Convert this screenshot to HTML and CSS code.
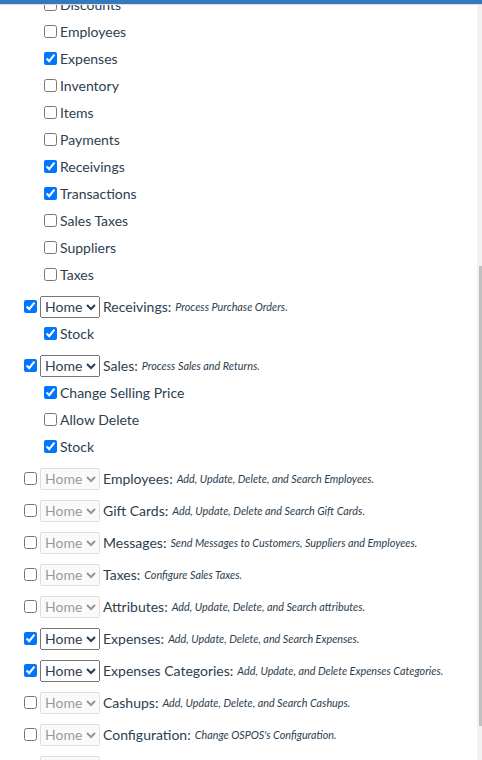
FILE: index.html
```html
<!DOCTYPE html>
<html lang="en">
<head>
<meta charset="utf-8">
<title>Permissions</title>
<link rel="stylesheet" href="styles.css">
</head>
<body>
<div class="topbar"></div>
<div class="viewport">
  <div class="content">
    <ul class="subs first">
      <li class="sub"><input type="checkbox"><span>Discounts</span></li>
      <li class="sub"><input type="checkbox"><span>Employees</span></li>
      <li class="sub"><input type="checkbox" checked><span>Expenses</span></li>
      <li class="sub"><input type="checkbox"><span>Inventory</span></li>
      <li class="sub"><input type="checkbox"><span>Items</span></li>
      <li class="sub"><input type="checkbox"><span>Payments</span></li>
      <li class="sub"><input type="checkbox" checked><span>Receivings</span></li>
      <li class="sub"><input type="checkbox" checked><span>Transactions</span></li>
      <li class="sub"><input type="checkbox"><span>Sales Taxes</span></li>
      <li class="sub"><input type="checkbox"><span>Suppliers</span></li>
      <li class="sub"><input type="checkbox"><span>Taxes</span></li>
    </ul>
    <ul class="modules">
      <li class="module">
        <div class="head"><input type="checkbox" checked><select class="sel"><option>Home</option></select><span class="name">Receivings:</span> <em class="desc">Process Purchase Orders.</em></div>
        <ul class="subs">
          <li class="sub"><input type="checkbox" checked><span>Stock</span></li>
        </ul>
      </li>
      <li class="module">
        <div class="head"><input type="checkbox" checked><select class="sel"><option>Home</option></select><span class="name">Sales:</span> <em class="desc">Process Sales and Returns.</em></div>
        <ul class="subs">
          <li class="sub"><input type="checkbox" checked><span>Change Selling Price</span></li>
          <li class="sub"><input type="checkbox"><span>Allow Delete</span></li>
          <li class="sub"><input type="checkbox" checked><span>Stock</span></li>
        </ul>
      </li>
      <li class="module">
        <div class="head"><input type="checkbox"><select class="sel" disabled><option>Home</option></select><span class="name">Employees:</span> <em class="desc">Add, Update, Delete, and Search Employees.</em></div>
      </li>
      <li class="module">
        <div class="head"><input type="checkbox"><select class="sel" disabled><option>Home</option></select><span class="name">Gift Cards:</span> <em class="desc">Add, Update, Delete and Search Gift Cards.</em></div>
      </li>
      <li class="module">
        <div class="head"><input type="checkbox"><select class="sel" disabled><option>Home</option></select><span class="name">Messages:</span> <em class="desc">Send Messages to Customers, Suppliers and Employees.</em></div>
      </li>
      <li class="module">
        <div class="head"><input type="checkbox"><select class="sel" disabled><option>Home</option></select><span class="name">Taxes:</span> <em class="desc">Configure Sales Taxes.</em></div>
      </li>
      <li class="module">
        <div class="head"><input type="checkbox"><select class="sel" disabled><option>Home</option></select><span class="name">Attributes:</span> <em class="desc">Add, Update, Delete, and Search attributes.</em></div>
      </li>
      <li class="module">
        <div class="head"><input type="checkbox" checked><select class="sel"><option>Home</option></select><span class="name">Expenses:</span> <em class="desc">Add, Update, Delete, and Search Expenses.</em></div>
      </li>
      <li class="module">
        <div class="head"><input type="checkbox" checked><select class="sel"><option>Home</option></select><span class="name">Expenses Categories:</span> <em class="desc">Add, Update, and Delete Expenses Categories.</em></div>
      </li>
      <li class="module">
        <div class="head"><input type="checkbox"><select class="sel" disabled><option>Home</option></select><span class="name">Cashups:</span> <em class="desc">Add, Update, Delete, and Search Cashups.</em></div>
      </li>
      <li class="module">
        <div class="head"><input type="checkbox"><select class="sel" disabled><option>Home</option></select><span class="name">Configuration:</span> <em class="desc">Change OSPOS's Configuration.</em></div>
      </li>
      <li class="module">
        <div class="head"><input type="checkbox"><select class="sel" disabled><option></option></select></div>
      </li>
    </ul>
  </div>
  <div class="scrollbar"><div class="track-top"></div><div class="thumb"></div></div>
</div>
</body>
</html>
```

FILE: styles.css
```css
html, body {
  margin: 0;
  padding: 0;
  height: 100%;
  overflow: hidden;
  background: #fff;
}
body {
  font-family: Lato, "Open Sans", sans-serif;
  font-size: 14px;
  color: #2c3e50;
}
.topbar {
  height: 4px;
  background: #3479bb;
  border-bottom: 1px solid #dcdcdc;
}
.viewport {
  display: flex;
  height: 755px;
  overflow: hidden;
}
.content {
  flex: 1;
  overflow: hidden;
}
ul {
  list-style: none;
  margin: 0;
  padding: 0;
}
.subs {
  padding-left: 44px;
}
.subs.first {
  margin-top: -14px;
}
.sub {
  height: 27px;
  display: flex;
  align-items: center;
  gap: 3px;
  white-space: nowrap;
}
input[type="checkbox"] {
  margin: 0;
  width: 13px;
  height: 13px;
  flex: none;
}
.module {
  padding-top: 5px;
}
.head {
  height: 27px;
  display: flex;
  align-items: center;
  padding-left: 24px;
  white-space: nowrap;
}
.head input[type="checkbox"] {
  margin-right: 3px;
}
.sel {
  font: inherit;
  color: inherit;
  margin: 0 3px 0 0;
  width: 60px;
  height: 22px;
  flex: none;
}
.sel:disabled {
  color: rgba(44, 62, 80, 0.75);
}
.name {
  margin-right: 4px;
}
.desc {
  font-size: 10.8px;
  font-style: italic;
}
.scrollbar {
  width: 5px;
  flex: none;
  background: #f1f1f1;
  display: flex;
  flex-direction: column;
  align-items: flex-end;
}
.track-top {
  height: 261px;
  flex: none;
}
.thumb {
  width: 3px;
  height: 460px;
  background: #c1c1c1;
}
```
